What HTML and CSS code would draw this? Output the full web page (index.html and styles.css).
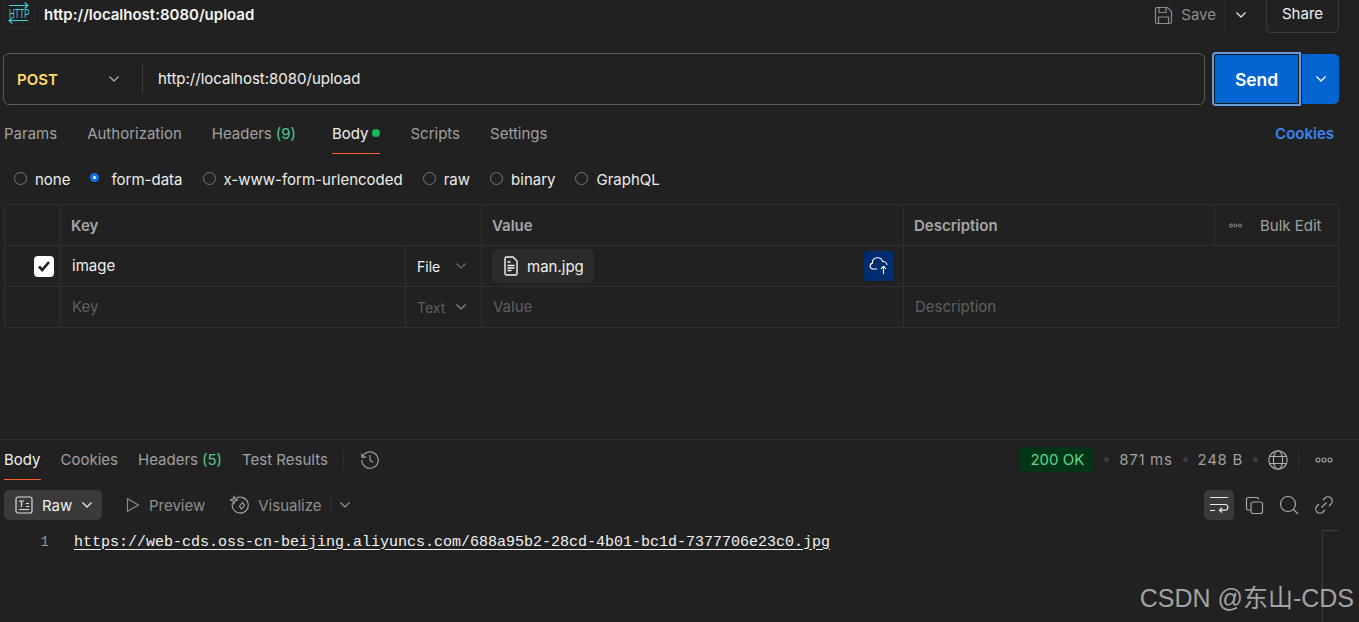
FILE: index.html
```html
<!DOCTYPE html>
<html lang="en">
<head>
    <meta charset="UTF-8">
    <meta name="viewport" content="width=device-width, initial-scale=1.0">
    <title>http://localhost:8080/upload</title>
    <link rel="stylesheet" href="styles.css">
</head>
<body>
    <header class="topbar">
        <div class="http-logo">
            <svg width="24" height="26" viewBox="0 0 24 26" fill="none" stroke="#3fd0e2" stroke-width="1.100">
                <path d="M3 6.500h19M18.500 3.500l3.500 3-3.500 3M22 21.500H3M6.500 18.500l-3.500 3 3.500 3"/>
            </svg>
            <span class="http-word">HTTP</span>
        </div>
        <div class="req-title">http://localhost:8080/upload</div>
        <div class="save-wrap">
            <svg class="save-icon" width="19" height="19" viewBox="0 0 19 19" fill="none" stroke="#8c8c8c" stroke-width="1.200">
                <path d="M1.500 3a1.500 1.500 0 0 1 1.500-1.500h10.500l4 4V16a1.500 1.500 0 0 1-1.500 1.500H3A1.500 1.500 0 0 1 1.500 16z"/>
                <path d="M5 1.500v5h7v-5M4.500 17.500v-6.500h10v6.500"/>
            </svg>
            <span class="save-label">Save</span>
            <span class="save-sep"></span>
            <svg class="chev" width="12" height="8" viewBox="0 0 12 8" fill="none" stroke="#e0e0e0" stroke-width="1.300"><path d="M1.500 1.500 6 6l4.500-4.500"/></svg>
            <div class="share-btn">Share</div>
        </div>
    </header>

    <div class="url-row">
        <div class="url-box">
            <div class="method">
                <span class="method-name">POST</span>
                <svg width="12" height="8" viewBox="0 0 12 8" fill="none" stroke="#a6a6a6" stroke-width="1.300"><path d="M1.500 1.500 6 6l4.500-4.500"/></svg>
            </div>
            <div class="url-text">http://localhost:8080/upload</div>
        </div>
        <div class="send-btn">Send</div>
        <div class="send-more">
            <svg width="12" height="8" viewBox="0 0 12 8" fill="none" stroke="#fff" stroke-width="1.300"><path d="M1.500 1.500 6 6l4.500-4.500"/></svg>
        </div>
    </div>

    <nav class="tabs req-tabs">
        <span class="tab">Params</span>
        <span class="tab">Authorization</span>
        <span class="tab headers-tab">Headers <em class="count">(9)</em></span>
        <span class="tab active">Body <i class="dot"></i></span>
        <span class="tab">Scripts</span>
        <span class="tab">Settings</span>
        <span class="cookies-link">Cookies</span>
    </nav>

    <div class="radios">
        <label class="radio"><i class="circle"></i>none</label>
        <label class="radio"><i class="circle on"></i>form-data</label>
        <label class="radio"><i class="circle"></i>x-www-form-urlencoded</label>
        <label class="radio"><i class="circle"></i>raw</label>
        <label class="radio"><i class="circle"></i>binary</label>
        <label class="radio"><i class="circle"></i>GraphQL</label>
    </div>

    <div class="params">
        <div class="row head">
            <div class="cell"></div>
            <div class="cell"><b>Key</b></div>
            <div class="cell"><b>Value</b></div>
            <div class="cell"><b>Description</b></div>
            <div class="cell bulk">
                <svg width="13" height="5" viewBox="0 0 13 5" fill="none" stroke="#9a9a9a"><circle cx="2" cy="2.500" r="1.500"/><circle cx="6.500" cy="2.500" r="1.500"/><circle cx="11" cy="2.500" r="1.500"/></svg>
                <span>Bulk Edit</span>
            </div>
        </div>
        <div class="row">
            <div class="cell check-cell">
                <span class="checkbox">
                    <svg width="14" height="12" viewBox="0 0 14 12" fill="none" stroke="#212121" stroke-width="2.600"><path d="M2 6.500 5.200 10 12 2"/></svg>
                </span>
            </div>
            <div class="cell key-cell">
                <span class="key-name">image</span>
                <span class="type-pick">File
                    <svg width="12" height="8" viewBox="0 0 12 8" fill="none" stroke="#6e6e6e" stroke-width="1.200"><path d="M1.500 1.500 6 6l4.500-4.500"/></svg>
                </span>
            </div>
            <div class="cell value-cell">
                <span class="file-chip">
                    <svg width="14" height="20" viewBox="0 0 14 20" fill="none" stroke="#f4f4f4" stroke-width="1.400">
                        <path d="M1 2.500A1.500 1.500 0 0 1 2.500 1H9l4 4v12.500a1.500 1.500 0 0 1-1.500 1.500h-9A1.500 1.500 0 0 1 1 17.500z"/>
                        <path d="M3.500 6h3M3.500 9.500h7M3.500 12h7M3.500 14.500h4"/>
                    </svg>
                    man.jpg
                </span>
                <span class="cloud-btn">
                    <svg width="20" height="20" viewBox="0 0 20 20" fill="none" stroke="#fff" stroke-width="1.100">
                        <path d="M8 13H4a3 3 0 0 1-.6-5.900A5.200 5.200 0 0 1 13.600 5.500 4 4 0 0 1 18 9"/>
                        <path d="M14.500 18v-7.500M12 12.800l2.500-2.500 2.500 2.500"/>
                    </svg>
                </span>
            </div>
            <div class="cell wide"></div>
        </div>
        <div class="row">
            <div class="cell"></div>
            <div class="cell key-cell">
                <span class="key-name hint">Key</span>
                <span class="type-pick hint">Text
                    <svg width="12" height="8" viewBox="0 0 12 8" fill="none" stroke="#8c8c8c" stroke-width="1.200"><path d="M1.500 1.500 6 6l4.500-4.500"/></svg>
                </span>
            </div>
            <div class="cell hint-cell">Value</div>
            <div class="cell wide hint-cell">Description</div>
        </div>
    </div>

    <section class="response">
        <nav class="tabs res-tabs">
            <span class="tab active">Body</span>
            <span class="tab">Cookies</span>
            <span class="tab">Headers <em class="count">(5)</em></span>
            <span class="tab">Test Results</span>
            <span class="vsep tabs-sep"></span>
            <svg class="history" width="20" height="20" viewBox="0 0 20 20" fill="none" stroke="#9c9c9c" stroke-width="1.200">
                <path d="M2.200 7.500A8.200 8.200 0 1 1 1.800 10M1.500 3.500l.7 4 4-.6M10 5v5.300l3.300 2"/>
            </svg>
            <div class="res-meta">
                <span class="status">200 OK</span>
                <i class="meta-dot"></i>
                <span class="stat">871 ms</span>
                <i class="meta-dot"></i>
                <span class="stat">248 B</span>
                <i class="meta-dot"></i>
                <svg width="20" height="20" viewBox="0 0 20 20" fill="none" stroke="#b0b0b0" stroke-width="1.100">
                    <circle cx="10" cy="10" r="9.200"/>
                    <ellipse cx="10" cy="10" rx="4.600" ry="9.200"/>
                    <path d="M1.800 6.500h16.400M1.800 13.500h16.400"/>
                </svg>
                <span class="vsep"></span>
                <svg class="more" width="18" height="6" viewBox="0 0 18 6" fill="none" stroke="#a6a6a6" stroke-width="1.100"><circle cx="3" cy="3" r="2"/><circle cx="9" cy="3" r="2"/><circle cx="15" cy="3" r="2"/></svg>
            </div>
        </nav>

        <div class="res-tools">
            <div class="raw-pick">
                <svg width="18" height="18" viewBox="0 0 18 18" fill="none" stroke="#dcdcdc" stroke-width="1.200">
                    <rect x="1" y="1" width="16" height="16" rx="2"/>
                    <path d="M4 5h5M6.500 5v6M4 13.500h10M11 7.500h3M11 10.500h3"/>
                </svg>
                <span>Raw</span>
                <svg width="12" height="8" viewBox="0 0 12 8" fill="none" stroke="#e8e8e8" stroke-width="1.300"><path d="M1.500 1.500 6 6l4.500-4.500"/></svg>
            </div>
            <span class="view-opt preview">
                <svg width="14" height="16" viewBox="0 0 14 16" fill="none" stroke="#8c8c8c" stroke-width="1.100"><path d="M1.500 1.800v12.400L12.500 8z"/></svg>
                Preview
            </span>
            <span class="view-opt visualize">
                <svg width="20" height="20" viewBox="0 0 20 20" fill="none" stroke="#a6a6a6" stroke-width="1.100">
                    <path d="M6 3.300A8 8 0 1 1 2.500 8M12.500 7.500l-3 3.500 2 3 3-3.500z"/>
                    <path d="M4 1.500l1 2.500 2.500 1-2.500 1-1 2.500-1-2.500L.5 5 3 4z"/>
                </svg>
                Visualize
            </span>
            <span class="vsep tall"></span>
            <svg width="12" height="8" viewBox="0 0 12 8" fill="none" stroke="#9a9a9a" stroke-width="1.200"><path d="M1.500 1.500 6 6l4.500-4.500"/></svg>
            <div class="icon-tools">
                <span class="tool on">
                    <svg width="20" height="18" viewBox="0 0 20 18" fill="none" stroke="#e8e8e8" stroke-width="1.200"><path d="M1 1.500h18M1 8.500h15a2.800 2.800 0 0 1 0 5.700H10.500M13 11.800l-2.500 2.400 2.500 2.300M1 14.500h5"/></svg>
                </span>
                <span class="tool">
                    <svg width="19" height="19" viewBox="0 0 19 19" fill="none" stroke="#a6a6a6" stroke-width="1.200"><path d="M5.500 14H3a1.500 1.500 0 0 1-1.500-1.500V3A1.500 1.500 0 0 1 3 1.500h9.500L14 3"/><rect x="6" y="6" width="11.500" height="11.500" rx="2"/></svg>
                </span>
                <span class="tool">
                    <svg width="20" height="20" viewBox="0 0 20 20" fill="none" stroke="#a6a6a6" stroke-width="1.200"><circle cx="9" cy="9" r="7.500"/><path d="M14.500 14.500l4.500 4.500"/></svg>
                </span>
                <span class="tool">
                    <svg width="20" height="20" viewBox="0 0 20 20" fill="none" stroke="#a6a6a6" stroke-width="1.200"><path d="M7.500 12.500l5-5M9 5l2-2a4.200 4.200 0 0 1 6 6l-2 2M11 15l-2 2a4.200 4.200 0 0 1-6-6l2-2"/></svg>
                </span>
            </div>
        </div>

        <div class="code-line">
            <span class="line-no">1</span>
            <a class="res-link">https://web-cds.oss-cn-beijing.aliyuncs.com/688a95b2-28cd-4b01-bc1d-7377706e23c0.jpg</a>
        </div>
    </section>

    <div class="ruler"></div>
    <div class="watermark">CSDN @东山-CDS</div>
</body>
</html>
```
FILE: styles.css
```css
* {
    box-sizing: border-box;
}
html, body {
    height: 622px;
}
body {
    margin: 0;
    overflow: hidden;
    position: relative;
    background-color: #212121;
    color: #f0f0f0;
    font-family: Inter, "Liberation Sans", sans-serif;
    font-size: 15px;
}
svg {
    display: block;
    flex: none;
}
em, i {
    font-style: normal;
}

/* top bar */
.topbar {
    display: flex;
    align-items: center;
    height: 30px;
    padding-left: 3px;
}
.http-logo {
    position: relative;
    width: 32px;
    height: 32px;
    margin-top: -4px;
    border: 1px solid #2b2b2b;
    border-radius: 6px;
}
.http-logo svg {
    margin: 1px 0 0 2px;
}
.http-word {
    position: absolute;
    left: 5px;
    top: 10px;
    color: #3fd0e2;
    font-family: "Liberation Sans", sans-serif;
    font-size: 12px;
    line-height: 13px;
    transform: scaleX(.65);
    transform-origin: left;
}
.req-title {
    margin: -2px 0 0 9px;
    font-weight: 600;
    color: #f4f4f4;
}
.save-wrap {
    display: flex;
    align-items: center;
    margin-left: auto;
    margin-right: 20px;
    height: 30px;
}
.save-label {
    margin: -2px 0 0 8px;
    color: #8c8c8c;
}
.save-sep {
    width: 1px;
    height: 34px;
    margin: 0 10px 0 8px;
    background-color: #2b2b2b;
}
.share-btn {
    display: flex;
    align-items: center;
    justify-content: center;
    width: 73px;
    height: 38px;
    margin: -2px 0 0 19px;
    padding-bottom: 2px;
    border: 1px solid #3d3d3d;
    border-radius: 5px;
    color: #f0f0f0;
}

/* url row */
.url-row {
    display: flex;
    align-items: center;
    height: 54px;
    margin: 22px 20px 0 3px;
}
.url-box {
    display: flex;
    align-items: center;
    width: 1203px;
    height: 52px;
    border: 1px solid #5a5a5a;
    border-radius: 6px;
}
.method {
    display: flex;
    align-items: center;
    justify-content: space-between;
    width: 139px;
    height: 30px;
    padding: 0 22px 0 13px;
    border-right: 1px solid #3d3d3d;
}
.method-name {
    color: #ffd96a;
    font-weight: 600;
}
.url-text {
    margin: -2px 0 0 15px;
    color: #f0f0f0;
}
.send-btn {
    display: flex;
    align-items: center;
    justify-content: center;
    width: 89px;
    height: 54px;
    margin-left: 7px;
    border: 2px solid #6b9ddb;
    outline: 1px solid #1a1a1a;
    outline-offset: -3px;
    border-radius: 4px 0 0 4px;
    background-color: #0265d2;
    color: #fff;
    font-size: 17.500px;
    font-weight: 600;
}
.send-more {
    display: flex;
    align-items: center;
    justify-content: center;
    width: 37px;
    height: 50px;
    margin-left: 1px;
    border-radius: 0 5px 5px 0;
    background-color: #0265d2;
}

/* tabs */
.tabs {
    display: flex;
    align-items: center;
    color: #a0a0a0;
}
.req-tabs {
    height: 50px;
    margin-top: 2px;
    padding: 0 25px 0 4px;
    gap: 30px;
}
.headers-tab {
    margin-right: 6px;
}
.tab {
    position: relative;
    display: flex;
    align-items: center;
    gap: 4px;
    white-space: nowrap;
}
.tab.active {
    color: #f0f0f0;
}
.tab.active::after {
    content: "";
    position: absolute;
    left: 0;
    right: 0;
    bottom: -11px;
    height: 1px;
    background-color: #ff5c30;
}
.count {
    color: #4ec98a;
}
.dot {
    width: 8px;
    height: 8px;
    border-radius: 50%;
    background-color: #14b856;
}
.cookies-link {
    margin-left: auto;
    color: #3b86f0;
    font-weight: 600;
}

/* radio row */
.radios {
    display: flex;
    align-items: center;
    height: 44px;
    padding: 0 0 0 14px;
    gap: 20px;
    color: #ededed;
}
.radio {
    display: flex;
    align-items: center;
    gap: 8px;
    margin-top: -1px;
}
.circle {
    width: 13px;
    height: 13px;
    margin-top: -2px;
    border: 1px solid #777;
    border-radius: 50%;
}
.circle.on {
    width: 9px;
    height: 9px;
    margin: -4px 4px 0 0;
    border: 3px solid #0f72e6;
    background-color: #fff;
}

/* params table */
.params {
    width: 1335px;
    margin: 2px 0 0 4px;
    border: 1px solid #303030;
    border-bottom: 0;
}
.row {
    display: grid;
    grid-template-columns: 56px 421px 422px 311px 1fr;
    height: 41px;
    border-bottom: 1px solid #303030;
}
.cell {
    display: flex;
    align-items: center;
    padding-left: 10px;
    border-right: 1px solid #303030;
    min-width: 0;
}
.cell:last-child {
    border-right: 0;
}
.cell.wide {
    grid-column: 4 / 6;
}
.head b {
    color: #a6a6a6;
    font-weight: 600;
}
.bulk {
    gap: 18px;
    padding-left: 14px;
    color: #a0a0a0;
}
.check-cell {
    justify-content: flex-end;
    padding: 0 6px 0 0;
}
.checkbox {
    display: flex;
    align-items: center;
    justify-content: center;
    width: 20px;
    height: 21px;
    border-radius: 4px;
    background-color: #fff;
}
.key-cell {
    justify-content: space-between;
    padding: 0;
}
.key-name {
    margin-top: -2px;
    padding-left: 11px;
    color: #f0f0f0;
}
.type-pick {
    display: flex;
    align-items: center;
    justify-content: space-between;
    width: 76px;
    height: 100%;
    padding: 0 14px 0 11px;
    border-left: 1px solid #303030;
    color: #f0f0f0;
    font-size: 14px;
}
.key-name.hint {
    color: #5f5f5f;
}
.type-pick.hint, .hint-cell {
    color: #5f5f5f;
}
.hint-cell {
    padding: 0 0 2px 11px;
}
.value-cell {
    justify-content: space-between;
    padding: 0 9px 0 10px;
}
.file-chip {
    display: flex;
    align-items: center;
    gap: 9px;
    height: 34px;
    padding: 0 10px 0 12px;
    border-radius: 5px;
    background-color: #2b2b2b;
    color: #f0f0f0;
}
.cloud-btn {
    display: flex;
    align-items: center;
    justify-content: center;
    width: 30px;
    height: 30px;
    border-radius: 4px;
    background-color: #002d70;
}

/* response */
.response {
    margin-top: 111px;
    border-top: 1px solid #303030;
}
.res-tabs {
    height: 39px;
    padding: 0 26px 0 4px;
    gap: 20px;
}
.res-tabs .tab.active::after {
    bottom: -11px;
}
.vsep {
    width: 1px;
    height: 18px;
    background-color: #303030;
}
.tabs-sep {
    margin-left: -5px;
}
.history {
    margin-left: -4px;
}
.res-meta {
    display: flex;
    align-items: center;
    gap: 10px;
    margin-left: auto;
    color: #a0a0a0;
}
.status {
    padding: 3px 10px;
    border-radius: 5px;
    background-color: #033516;
    color: #5ed98f;
}
.stat {
    letter-spacing: .7px;
}
.meta-dot {
    width: 5px;
    height: 5px;
    border-radius: 50%;
    background-color: #3d3d3d;
}
.more {
    margin-left: 6px;
}
.res-tools {
    display: flex;
    align-items: center;
    height: 30px;
    margin-top: 11px;
    padding: 0 20px 0 4px;
}
.raw-pick {
    display: flex;
    align-items: center;
    gap: 9px;
    width: 98px;
    height: 30px;
    padding-left: 11px;
    border-radius: 5px;
    background-color: #3a3a3a;
    color: #f0f0f0;
}
.view-opt {
    display: flex;
    align-items: center;
    color: #8f8f8f;
}
.preview {
    gap: 9px;
    margin-left: 24px;
}
.visualize {
    gap: 8px;
    margin-left: 25px;
}
.vsep.tall {
    height: 20px;
    margin: 0 8px;
}
.icon-tools {
    display: flex;
    align-items: center;
    gap: 5px;
    margin-left: auto;
}
.tool {
    display: flex;
    align-items: center;
    justify-content: center;
    width: 30px;
    height: 30px;
    border-radius: 5px;
}
.tool.on {
    background-color: #3a3a3a;
}
.code-line {
    display: flex;
    align-items: center;
    height: 20px;
    margin-top: 12px;
    font-family: "Liberation Mono", monospace;
    font-size: 15px;
}
.line-no {
    width: 74px;
    padding-right: 25px;
    color: #9a9a9a;
    text-align: right;
    font-size: 14px;
}
.res-link {
    color: #f2f2f2;
    text-decoration: underline;
    text-underline-offset: 3px;
}

/* over the editor */
.ruler {
    position: absolute;
    left: 1322px;
    top: 530px;
    width: 17px;
    height: 92px;
    border-left: 1px solid #3d3d3d;
    border-top: 1px solid #3d3d3d;
}
.watermark {
    position: absolute;
    right: 5px;
    top: 578px;
    color: #a3a3a3;
    font-family: "Liberation Sans", "Noto Sans CJK SC", sans-serif;
    font-size: 25px;
    white-space: nowrap;
}
```
